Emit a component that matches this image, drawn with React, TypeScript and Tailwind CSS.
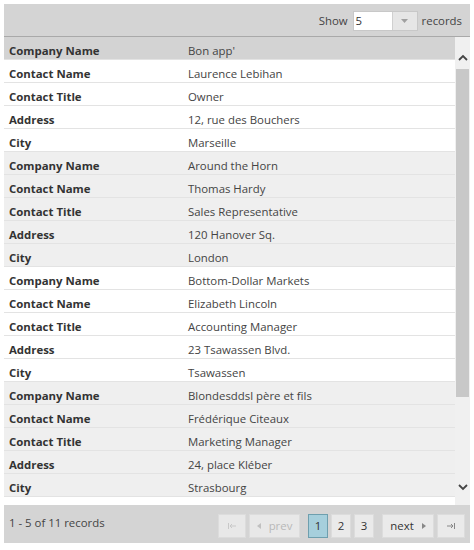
import React from "react";

const records = [
  { company: "Bon app'", contact: "Laurence Lebihan", title: "Owner", address: "12, rue des Bouchers", city: "Marseille" },
  { company: "Around the Horn", contact: "Thomas Hardy", title: "Sales Representative", address: "120 Hanover Sq.", city: "London" },
  { company: "Bottom-Dollar Markets", contact: "Elizabeth Lincoln", title: "Accounting Manager", address: "23 Tsawassen Blvd.", city: "Tsawassen" },
  { company: "Blondesddsl père et fils", contact: "Frédérique Citeaux", title: "Marketing Manager", address: "24, place Kléber", city: "Strasbourg" },
];

export default function App() {
  const rows: { label: string; value: string; bg: string }[] = [];
  records.forEach((r, i) => {
    const base = i % 2 === 0 ? "bg-white" : "bg-[#efefef]";
    const fields: [string, string][] = [
      ["Company Name", r.company],
      ["Contact Name", r.contact],
      ["Contact Title", r.title],
      ["Address", r.address],
      ["City", r.city],
    ];
    fields.forEach(([l, v], j) => {
      rows.push({ label: l, value: v, bg: i === 0 && j === 0 ? "bg-[#d3d3d3]" : base });
    });
  });

  return (
    <div className="p-[4px] text-[11.4px] text-[#333]" style={{ fontFamily: '"Open Sans", "Noto Sans", sans-serif' }}>
      <div className="w-[466px]">
        <div className="h-[33px] bg-[#d4d4d4] border-b border-[#a9a9a9] flex items-center justify-end pr-[8px] gap-[5px]">
          <span className="text-[#444] pt-[1px]">Show</span>
          <div className="flex h-[20px] border border-[#c8c8c8] mt-[2px] mr-[-1px]">
            <div className="w-[38px] bg-white pl-[2px] leading-[18px]">5</div>
            <div className="w-[25px] bg-[#e6e6e6] border-l border-[#d0d0d0] flex items-center justify-center">
              <svg width="7" height="4" viewBox="0 0 7 4"><path d="M0 0h7L3.5 4z" fill="#a0a0a0" /></svg>
            </div>
          </div>
          <span className="text-[#444] pt-[1px]">records</span>
        </div>
        <div className="flex h-[468px] bg-white">
          <div className="w-[451px]">
            {rows.map((r, k) => (
              <div key={k} className={`grid grid-cols-[179px_1fr] h-[23px] pt-[6px] leading-[16px] border-b border-[#e3e3e3] ${r.bg}`}>
                <div className="pl-[5px] font-bold text-[#333]">{r.label}</div>
                <div className="pl-[5px] text-[#444]">{r.value}</div>
              </div>
            ))}
          </div>
          <div className="w-[15px] bg-[#f0f0f0] flex flex-col items-center">
            <div className="h-[30px] flex items-center justify-center pt-[10px]">
              <svg width="10" height="7" viewBox="0 0 10 7"><path d="M1 6l4-4 4 4" stroke="#444" strokeWidth="1.8" fill="none" /></svg>
            </div>
            <div className="w-[13px] h-[328px] bg-[#c8c8c8] mt-[2px]" />
            <div className="flex-1" />
            <div className="h-[30px] flex items-center justify-center pb-[6px]">
              <svg width="10" height="7" viewBox="0 0 10 7"><path d="M1 1l4 4 4-4" stroke="#444" strokeWidth="1.8" fill="none" /></svg>
            </div>
          </div>
        </div>
        <div className="h-[38px] bg-[#d4d4d4] flex items-center justify-between pl-[5px] pr-[5px]">
          <span className="text-[#444] pb-[2px]">1 - 5 of 11 records</span>
          <div className="flex items-center h-[24px] gap-[3px] mt-[3px]">
            <div className="w-[28px] h-[24px] bg-[#e8e8e8] border border-[#dcdcdc] flex items-center justify-center">
              <svg width="8" height="6" viewBox="0 0 8 6"><path d="M0.5 0v6M2 3h6M2 3l2-2M2 3l2 2" stroke="#c8c8c8" strokeWidth="1" fill="none" /></svg>
            </div>
            <div className="w-[51px] h-[24px] bg-[#e8e8e8] border border-[#dcdcdc] flex items-center justify-center gap-[8px] text-[#b8b8b8]">
              <svg width="4" height="6" viewBox="0 0 4 6"><path d="M4 0v6L0 3z" fill="#c0c0c0" /></svg>
              <span>prev</span>
            </div>
            <div className="flex gap-[3px] ml-[5px]">
              <div className="w-[20px] h-[24px] bg-[#a6cfdc] border border-[#6e9fae] flex items-center justify-center text-[#333]">1</div>
              <div className="w-[20px] h-[24px] bg-[#eaeaea] border border-[#dcdcdc] flex items-center justify-center text-[#333]">2</div>
              <div className="w-[20px] h-[24px] bg-[#eaeaea] border border-[#dcdcdc] flex items-center justify-center text-[#333]">3</div>
            </div>
            <div className="w-[52px] h-[24px] bg-[#eaeaea] border border-[#dcdcdc] flex items-center justify-center gap-[8px] text-[#333] ml-[5px]">
              <span>next</span>
              <svg width="4" height="6" viewBox="0 0 4 6"><path d="M0 0v6l4-3z" fill="#888" /></svg>
            </div>
            <div className="w-[28px] h-[24px] bg-[#eaeaea] border border-[#dcdcdc] flex items-center justify-center">
              <svg width="8" height="6" viewBox="0 0 8 6"><path d="M7.5 0v6M0 3h6M6 3l-2-2M6 3l-2 2" stroke="#888" strokeWidth="1" fill="none" /></svg>
            </div>
          </div>
        </div>
      </div>
    </div>
  );
}
